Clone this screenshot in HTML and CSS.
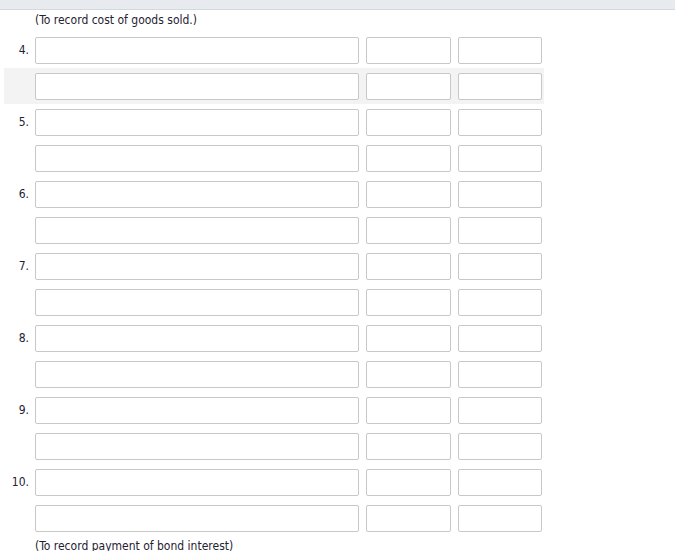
FILE: index.html
```html
<!DOCTYPE html>
<html>
<head>
<meta charset="utf-8">
<link rel="stylesheet" href="styles.css">
</head>
<body>
<div class="topbar"></div>
<div class="note">(To record cost of goods sold.)</div>
<div class="rows">
  <div class="row"><span class="num">4.</span><span class="inp acct"></span><span class="inp amt"></span><span class="inp amt2"></span></div>
  <div class="row hl"><span class="num"></span><span class="inp acct"></span><span class="inp amt"></span><span class="inp amt2"></span></div>
  <div class="row"><span class="num">5.</span><span class="inp acct"></span><span class="inp amt"></span><span class="inp amt2"></span></div>
  <div class="row"><span class="num"></span><span class="inp acct"></span><span class="inp amt"></span><span class="inp amt2"></span></div>
  <div class="row"><span class="num">6.</span><span class="inp acct"></span><span class="inp amt"></span><span class="inp amt2"></span></div>
  <div class="row"><span class="num"></span><span class="inp acct"></span><span class="inp amt"></span><span class="inp amt2"></span></div>
  <div class="row"><span class="num">7.</span><span class="inp acct"></span><span class="inp amt"></span><span class="inp amt2"></span></div>
  <div class="row"><span class="num"></span><span class="inp acct"></span><span class="inp amt"></span><span class="inp amt2"></span></div>
  <div class="row"><span class="num">8.</span><span class="inp acct"></span><span class="inp amt"></span><span class="inp amt2"></span></div>
  <div class="row"><span class="num"></span><span class="inp acct"></span><span class="inp amt"></span><span class="inp amt2"></span></div>
  <div class="row"><span class="num">9.</span><span class="inp acct"></span><span class="inp amt"></span><span class="inp amt2"></span></div>
  <div class="row"><span class="num"></span><span class="inp acct"></span><span class="inp amt"></span><span class="inp amt2"></span></div>
  <div class="row"><span class="num">10.</span><span class="inp acct"></span><span class="inp amt"></span><span class="inp amt2"></span></div>
  <div class="row"><span class="num"></span><span class="inp acct"></span><span class="inp amt"></span><span class="inp amt2"></span></div>
</div>
<div class="note bottom">(To record payment of bond interest)</div>
</body>
</html>
```
FILE: styles.css
```css
html, body {
  margin: 0;
  padding: 0;
  background: #ffffff;
  font-family: "DejaVu Sans Condensed", "DejaVu Sans", sans-serif;
  font-size: 12px;
  color: #1f2233;
  overflow: hidden;
}
.topbar {
  height: 9px;
  background: #e7ebef;
  border-bottom: 1px solid #d3d8dd;
}
.note {
  padding-left: 35px;
  height: 21px;
  line-height: 19px;
  padding-top: 1px;
}
.rows {
  display: flex;
  flex-direction: column;
}
.row {
  display: flex;
  align-items: center;
  height: 36px;
  margin-left: 4px;
  width: 540px;
  box-sizing: border-box;
}
.row.hl {
  background: #f3f3f3;
}
.num {
  width: 25px;
  text-align: right;
  padding-right: 6px;
  flex: none;
}
.inp {
  display: block;
  height: 27px;
  box-sizing: border-box;
  border: 1px solid #c8c8c8;
  border-radius: 2px;
  background: #ffffff;
  flex: none;
}
.acct { width: 324px; }
.amt { width: 85px; margin-left: 7px; }
.amt2 { width: 84px; margin-left: 7px; }
.note.bottom {
  height: auto;
  line-height: 16px;
  padding-top: 2px;
}
```
